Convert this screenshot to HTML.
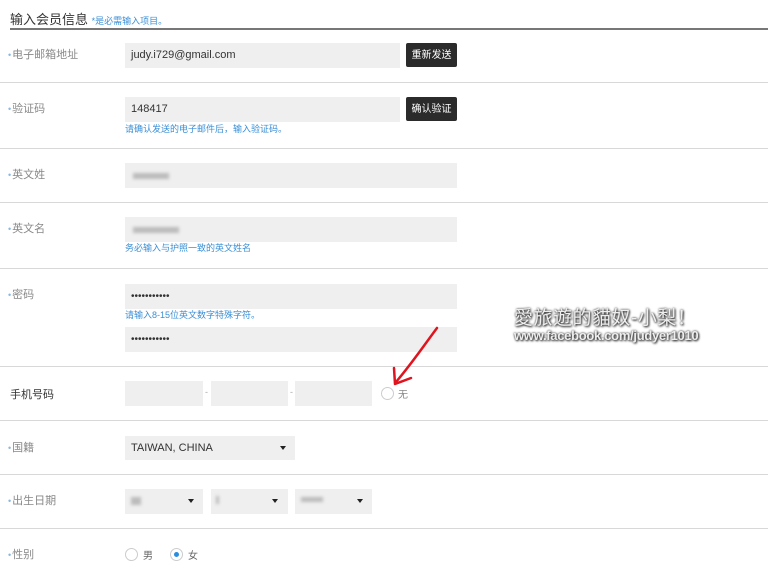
<!DOCTYPE html>
<html><head><meta charset="utf-8"><style>
body{margin:0;width:768px;height:576px;background:#fff;position:relative;overflow:hidden;font-family:"Liberation Sans","Noto Sans CJK SC",sans-serif;}
.a{position:absolute}
.hr{position:absolute;left:0;width:768px;height:1px;background:#d8d8d8}
.lb{position:absolute;left:8px;font-size:11px;color:#888;line-height:14px}
.lb:before{content:"•";color:#8ab8de;font-size:9px;margin-right:1px}
.in{position:absolute;background:#efefef;font-size:11px;color:#333;line-height:25px;padding-left:6px;box-sizing:border-box;height:25px}
.bt{position:absolute;background:#2b2b2b;color:#fff;font-size:10px;text-align:center;line-height:24px;border-radius:2px;width:51px;height:24px;left:406px}
.hint{position:absolute;left:125px;font-size:9px;color:#3a8fd6;line-height:10px}
.arr{position:absolute;width:0;height:0;border-left:3.5px solid transparent;border-right:3.5px solid transparent;border-top:4px solid #222}
.rad{position:absolute;width:11px;height:11px;border:1px solid #ccc;border-radius:50%;box-sizing:border-box;background:#fff}
.blur{position:absolute;height:6px;background:#bbb;filter:blur(1.5px)}
</style></head><body>
<div class="a" style="left:10px;top:9px;font-size:13px;color:#333">输入会员信息 <span style="font-size:9px;color:#3a8fd6">*是必需输入项目。</span></div>
<div class="a" style="left:10px;top:28px;width:758px;height:2px;background:#777"></div>

<div class="lb" style="top:48px">电子邮箱地址</div>
<div class="in" style="left:125px;top:43px;width:275px">judy.i729@gmail.com</div>
<div class="bt" style="top:43px;line-height:25px">重新发送</div>
<div class="hr" style="top:82px"></div>

<div class="lb" style="top:102px">验证码</div>
<div class="in" style="left:125px;top:97px;width:275px">148417</div>
<div class="bt" style="top:97px;line-height:25px">确认验证</div>
<div class="hint" style="top:124px">请确认发送的电子邮件后，输入验证码。</div>
<div class="hr" style="top:148px"></div>

<div class="lb" style="top:168px">英文姓</div>
<div class="in" style="left:125px;top:163px;width:332px"></div>
<div class="blur" style="left:133px;top:173px;width:36px"></div>
<div class="hr" style="top:202px"></div>

<div class="lb" style="top:222px">英文名</div>
<div class="in" style="left:125px;top:217px;width:332px"></div>
<div class="blur" style="left:133px;top:227px;width:46px"></div>
<div class="hint" style="top:243px">务必输入与护照一致的英文姓名</div>
<div class="hr" style="top:268px"></div>

<div class="lb" style="top:288px">密码</div>
<div class="in" style="left:125px;top:284px;width:332px;font-size:10px">•••••••••••</div>
<div class="hint" style="top:310px">请输入8-15位英文数字特殊字符。</div>
<div class="in" style="left:125px;top:327px;width:332px;font-size:10px">•••••••••••</div>
<div class="hr" style="top:366px"></div>

<div class="a" style="left:10px;top:386px;font-size:11px;color:#333">手机号码</div>
<div class="in" style="left:125px;top:381px;width:78px"></div>
<div class="a" style="left:205px;top:387px;font-size:9px;color:#aaa">-</div>
<div class="in" style="left:211px;top:381px;width:77px"></div>
<div class="a" style="left:290px;top:387px;font-size:9px;color:#aaa">-</div>
<div class="in" style="left:295px;top:381px;width:77px"></div>
<div class="rad" style="left:381px;top:387px;width:13px;height:13px"></div>
<div class="a" style="left:398px;top:386px;font-size:10px;color:#888">无</div>
<div class="hr" style="top:420px"></div>

<div class="lb" style="top:441px">国籍</div>
<div class="in" style="left:125px;top:436px;width:170px;height:24px;line-height:24px">TAIWAN, CHINA</div>
<div class="arr" style="left:280px;top:446px"></div>
<div class="hr" style="top:474px"></div>

<div class="lb" style="top:494px">出生日期</div>
<div class="in" style="left:125px;top:489px;width:78px;height:25px"></div>
<div class="blur" style="left:131px;top:497px;width:10px;height:8px"></div>
<div class="arr" style="left:188px;top:499px"></div>
<div class="in" style="left:211px;top:489px;width:77px;height:25px"></div>
<div class="blur" style="left:216px;top:496px;width:3px;height:8px"></div>
<div class="arr" style="left:272px;top:499px"></div>
<div class="in" style="left:295px;top:489px;width:77px;height:25px"></div>
<div class="blur" style="left:301px;top:497px;width:22px;height:5px"></div>
<div class="arr" style="left:357px;top:499px"></div>
<div class="hr" style="top:528px"></div>

<div class="lb" style="top:548px">性别</div>
<div class="rad" style="left:125px;top:548px;width:13px;height:13px"></div>
<div class="a" style="left:143px;top:547px;font-size:10px;color:#666">男</div>
<div class="rad" style="left:170px;top:548px;width:13px;height:13px"></div>
<div class="a" style="left:174px;top:552px;width:5px;height:5px;border-radius:50%;background:#2a8de0"></div>
<div class="a" style="left:188px;top:547px;font-size:10px;color:#666">女</div>

<div class="a" style="left:514px;top:303px;font-size:19px;color:#eee;letter-spacing:0.5px;text-shadow:0 0 2px #222,1px 1px 2px #222">愛旅遊的貓奴-小梨！</div>
<div class="a" style="left:514px;top:328px;font-size:13px;font-weight:bold;color:#eee;letter-spacing:-0.3px;text-shadow:0 0 2px #222,1px 1px 2px #222">www.facebook.com/judyer1010</div>

<svg class="a" style="left:385px;top:322px" width="60" height="70" viewBox="0 0 60 70">
<path d="M52 6 C40 22 28 40 11 60" stroke="#e0141e" stroke-width="2.5" fill="none" stroke-linecap="round"/>
<path d="M9 46 L10 62 L26 56" stroke="#e0141e" stroke-width="2.5" fill="none" stroke-linecap="round" stroke-linejoin="round"/>
</svg>
</body></html>
